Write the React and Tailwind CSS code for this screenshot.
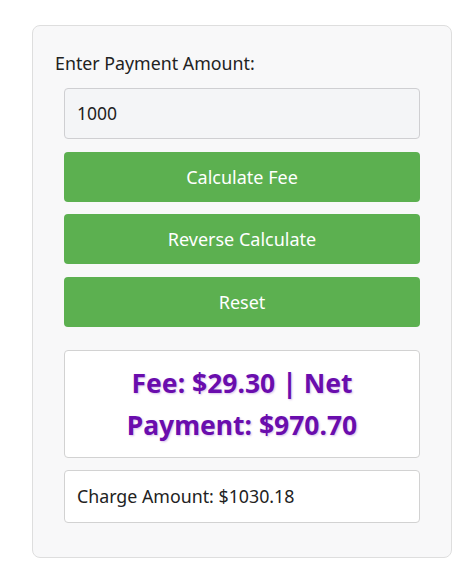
export default function App() {
  const font = { fontFamily: '"Noto Sans", "Open Sans", sans-serif' };
  return (
    <div className="w-[471px] h-[575px] bg-white pt-[25px] pl-[32px]" style={font}>
      <div className="w-[420px] h-[533px] bg-[#f8f8f9] border border-[#dedede] rounded-[8px] px-[22px] pt-[25px]">
        <div className="text-[17.8px] leading-[24px] text-[#222] mb-[13px]">Enter Payment Amount:</div>
        <div className="mx-[9px] flex flex-col">
          <div className="h-[51px] bg-[#f4f5f7] border border-[#cfcfd2] rounded-[4px] flex items-center px-[12px] text-[17.5px] text-[#222]">1000</div>
          <button className="mt-[13px] h-[50px] bg-[#5cb050] rounded-[4px] text-white text-[18px]">Calculate Fee</button>
          <button className="mt-[12px] h-[50px] bg-[#5cb050] rounded-[4px] text-white text-[18px]">Reverse Calculate</button>
          <button className="mt-[13px] h-[50px] bg-[#5cb050] rounded-[4px] text-white text-[18px]">Reset</button>
          <div className="mt-[23px] h-[108px] bg-white border border-[#d2d2d2] rounded-[4px] flex items-center justify-center px-[20px] text-center">
            <div className="text-[26.5px] leading-[42px] font-bold text-[#6a0dad] [text-shadow:1px_1px_2px_rgba(106,13,173,0.25)]">Fee: $29.30 | Net Payment: $970.70</div>
          </div>
          <div className="mt-[12px] h-[53px] bg-white border border-[#d2d2d2] rounded-[4px] flex items-center px-[12px] text-[17.8px] text-[#222]">Charge Amount: $1030.18</div>
        </div>
      </div>
    </div>
  );
}
